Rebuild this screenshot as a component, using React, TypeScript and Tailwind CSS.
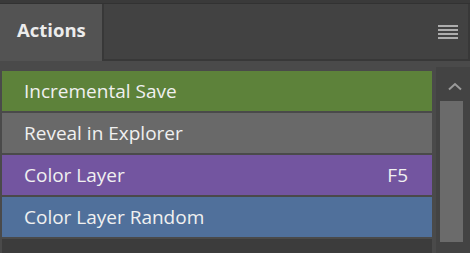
import React from "react";

const rows = [
  { label: "Incremental Save", bg: "bg-[#5d823a]", key: "" },
  { label: "Reveal in Explorer", bg: "bg-[#696969]", key: "" },
  { label: "Color Layer", bg: "bg-[#7355a0]", key: "F5" },
  { label: "Color Layer Random", bg: "bg-[#50709b]", key: "" },
  { label: "Automatic Highlight", bg: "bg-[#3c3c3c]", key: "" },
];

export default function App() {
  return (
    <div
      className="w-[470px] h-[253px] overflow-hidden flex flex-col bg-[#4a4a4a] text-[#f0f0f0]"
      style={{ fontFamily: '"Open Sans", "Noto Sans", sans-serif' }}
    >
      {/* top strip */}
      <div className="h-[4px] bg-[#3a3a3a] border-b border-[#323232] shrink-0" />

      {/* header */}
      <div className="h-[57px] flex shrink-0">
        <div className="w-[102px] bg-[#535353] pl-[17px] pt-[14px] text-[18.5px] font-bold leading-[24px] text-[#ececec]">
          Actions
        </div>
        <div className="flex-1 bg-[#424242] border-l-2 border-b-2 border-[#383838] flex justify-end pt-[21px] pr-[10px]">
          <div className="flex flex-col gap-[2px]">
            <div className="w-[20px] h-[2px] bg-[#adadad]" />
            <div className="w-[20px] h-[2px] bg-[#adadad]" />
            <div className="w-[20px] h-[2px] bg-[#adadad]" />
            <div className="w-[20px] h-[2px] bg-[#adadad]" />
          </div>
        </div>
        <div className="w-[2px] bg-[#383838]" />
      </div>

      {/* body */}
      <div className="flex-1 flex min-h-0">
        <div className="w-[430px] ml-[2px] pt-[10px] flex flex-col gap-[2px]">
          {rows.map((r, i) => (
            <div
              key={r.label}
              className={`${r.bg} h-[40px] shrink-0 flex items-center justify-between pl-[22px] pr-[24px] text-[19px] leading-none ${i === rows.length - 1 ? "pt-[6px]" : ""}`}
            >
              <span>{r.label}</span>
              {r.key && <span>{r.key}</span>}
            </div>
          ))}
        </div>
        <div className="ml-[4px] mt-[6px] w-[34px] bg-[#434343] flex flex-col items-start">
          <svg width="34" height="34" viewBox="0 0 34 34" className="shrink-0">
            <path d="M13 22.5 L19 17 L25 22.5" fill="none" stroke="#9a9a9a" strokeWidth="2" />
          </svg>
          <div className="ml-[4px] w-[23px] h-[141px] bg-[#6b6b6b]" />
        </div>
      </div>
    </div>
  );
}
